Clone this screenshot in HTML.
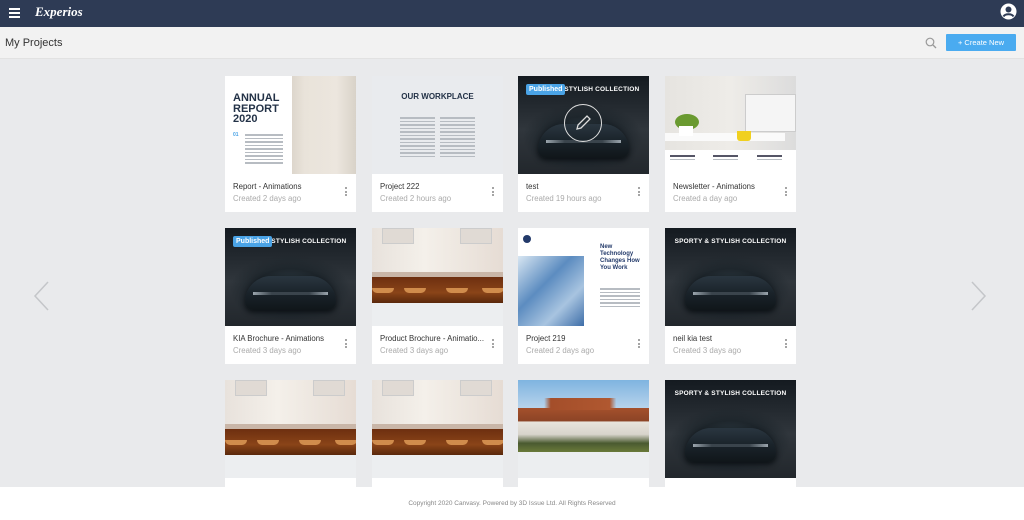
<!DOCTYPE html>
<html><head><meta charset="utf-8"><style>
*{margin:0;padding:0;box-sizing:border-box}
body{width:1024px;height:520px;overflow:hidden;background:#e9eaec;font-family:"Liberation Sans",sans-serif;position:relative}
.top{position:absolute;left:0;top:0;width:1024px;height:27px;background:#2e3b55}
.sub{position:absolute;left:0;top:27px;width:1024px;height:32px;background:#f2f2f2;border-bottom:1px solid #e2e2e2}
.sub h1{position:absolute;left:5px;top:10px;font-size:11px;font-weight:normal;color:#333}
.btn{position:absolute;left:946px;top:34px;width:70px;height:17px;background:#4aabf0;color:#fff;font-size:7.5px;line-height:17px;text-align:center;border-radius:1px}
.foot{position:absolute;left:0;top:487px;width:1024px;height:33px;background:#fff;font-size:6.5px;color:#888;text-align:center;padding-top:13px}
.card{position:absolute;width:131px;height:136px;background:#fff;overflow:hidden}
.th{position:absolute;left:0;top:0;width:131px;height:98px;overflow:hidden}
.t1{position:absolute;left:8px;top:106px;font-size:7.8px;color:#333;white-space:nowrap}
.t2{position:absolute;left:8px;top:118px;font-size:7.8px;color:#aaa}
.dots{position:absolute;right:9px;top:111px;width:2px}
.dots i{display:block;width:2px;height:2px;background:#888;border-radius:1px;margin-bottom:1.5px}
.pub{position:absolute;left:8px;top:8px;background:#4aa3e6;color:#fff;font-size:7px;font-weight:bold;padding:2px 3px;border-radius:2px}
.car{background:radial-gradient(ellipse 60px 35px at 65px 62px,#3a4a54 0%,#1e262c 60%,transparent 100%),linear-gradient(180deg,#141a20 0%,#30363c 55%,#22272c 100%)}
.ct{position:absolute;top:10px;left:0;width:131px;text-align:center;color:#fff;font-size:6.5px;font-weight:bold;letter-spacing:.2px}
.carbody{position:absolute;left:20px;top:48px;width:91px;height:34px;background:linear-gradient(180deg,#2a3640 0%,#1a232a 50%,#10161a 100%);border-radius:26px 26px 8px 8px;box-shadow:0 2px 6px #0a0e12}
.carbody:before{content:"";position:absolute;left:8px;top:16px;width:75px;height:3px;background:linear-gradient(90deg,#9aa4ac,#3a444c 25%,#3a444c 75%,#9aa4ac)}
.line{height:1.5px;background:#b7bcc2;margin-bottom:2px}
.kit .a{position:absolute;left:0;top:0;width:131px;height:44px;background:linear-gradient(90deg,#e8e2dc,#f4f0ea 40%,#e6dcd4)}
.kit .a:before{content:"";position:absolute;left:10px;top:0;width:30px;height:14px;background:#e0dad4;border:1px solid #ccc}
.kit .a:after{content:"";position:absolute;left:88px;top:0;width:30px;height:14px;background:#e0dad4;border:1px solid #ccc}
.kit .b{position:absolute;left:0;top:44px;width:131px;height:5px;background:#c9b6a8}
.kit .c{position:absolute;left:0;top:49px;width:131px;height:26px;background:linear-gradient(180deg,#6d2f10,#8a4418 60%,#5a280c)}
.kit .d{position:absolute;left:0;top:75px;width:131px;height:23px;background:#eceef0}
.stool{position:absolute;top:60px;width:22px;height:5px;background:#d08c4c;border-radius:0 0 10px 10px}
</style></head><body>
<div class="top">
<div style="position:absolute;left:9px;top:8px;width:11px"><div style="height:1.6px;background:#fff;margin-bottom:2.4px"></div><div style="height:1.6px;background:#fff;margin-bottom:2.4px"></div><div style="height:1.6px;background:#fff"></div></div>
<div style="position:absolute;left:35px;top:4px;color:#fff;font:italic bold 13px 'Liberation Serif',serif">Experios</div>
<svg style="position:absolute;left:1000px;top:3px" width="17" height="17" viewBox="0 0 17 17"><circle cx="8.5" cy="8.5" r="8" fill="#fff"/><circle cx="8.5" cy="6.5" r="3" fill="#2e3b55"/><path d="M3.5 13.5c1.5-3 8.5-3 10 0" stroke="#2e3b55" stroke-width="2" fill="none"/></svg>
</div>
<div class="sub"><h1>My Projects</h1>
<svg style="position:absolute;left:925px;top:10px" width="12" height="12" viewBox="0 0 12 12"><circle cx="5" cy="5" r="3.8" stroke="#999" stroke-width="1.2" fill="none"/><path d="M8 8l3 3" stroke="#999" stroke-width="1.3"/></svg>
</div>
<div class="btn">+ Create New</div>
<svg style="position:absolute;left:32px;top:280px" width="18" height="32"><path d="M16 2L3 16l13 14" stroke="#c4c6c9" stroke-width="1.5" fill="none"/></svg>
<svg style="position:absolute;left:970px;top:280px" width="18" height="32"><path d="M2 2l13 14L2 30" stroke="#c4c6c9" stroke-width="1.5" fill="none"/></svg>

<!-- row 1 -->
<div class="card" style="left:225px;top:76px"><div class="th" style="background:#fff">
<div style="position:absolute;left:67px;top:0;width:64px;height:98px;background:linear-gradient(90deg,#ddd6cc,#e9e3da 20%,#ece6de 70%,#d8d2c8)"></div>
<div style="position:absolute;left:8px;top:17px;font:bold 11px/10.5px 'Liberation Sans';color:#233247;width:55px">ANNUAL REPORT 2020</div>
<div style="position:absolute;left:8px;top:56px;font:bold 5px 'Liberation Sans';color:#4aa3e6">01</div>
<div style="position:absolute;left:20px;top:58px;width:38px"><div class="line"></div><div class="line"></div><div class="line"></div><div class="line"></div><div class="line"></div><div class="line"></div><div class="line"></div><div class="line"></div><div class="line"></div></div>
</div><div class="t1">Report - Animations</div><div class="t2">Created 2 days ago</div><div class="dots"><i></i><i></i><i></i></div></div>

<div class="card" style="left:372px;top:76px"><div class="th" style="background:#e9ebee">
<div style="position:absolute;left:0;top:16px;width:131px;text-align:center;font:bold 8px 'Liberation Sans';color:#233247">OUR WORKPLACE</div>
<div style="position:absolute;left:28px;top:41px;width:35px"><div class="line"></div><div class="line"></div><div class="line"></div><div class="line"></div><div class="line"></div><div class="line"></div><div class="line"></div><div class="line"></div><div class="line"></div><div class="line"></div><div class="line"></div><div class="line"></div></div>
<div style="position:absolute;left:68px;top:41px;width:35px"><div class="line"></div><div class="line"></div><div class="line"></div><div class="line"></div><div class="line"></div><div class="line"></div><div class="line"></div><div class="line"></div><div class="line"></div><div class="line"></div><div class="line"></div><div class="line"></div></div>
</div><div class="t1">Project 222</div><div class="t2">Created 2 hours ago</div><div class="dots"><i></i><i></i><i></i></div></div>

<div class="card" style="left:518px;top:76px"><div class="th car"><div class="ct">SPORTY &amp; STYLISH COLLECTION</div><div class="carbody"></div>
<div style="position:absolute;left:46px;top:28px;width:38px;height:38px;border:1.5px solid #ddd;border-radius:50%"></div>
<svg style="position:absolute;left:56px;top:38px" width="18" height="18"><path d="M3 15l1-4 9-9 3 3-9 9z" stroke="#ddd" stroke-width="1.3" fill="none"/></svg>
<div class="pub">Published</div></div>
<div class="t1">test</div><div class="t2">Created 19 hours ago</div><div class="dots"><i></i><i></i><i></i></div></div>

<div class="card" style="left:665px;top:76px"><div class="th" style="background:#fff">
<div style="position:absolute;left:0;top:0;width:131px;height:74px;background:linear-gradient(90deg,#e6e4e0,#eeece8 50%,#dcdcdc)"></div>
<div style="position:absolute;left:80px;top:18px;width:51px;height:38px;background:#f5f5f5;border:1px solid #ccc"></div>
<div style="position:absolute;left:0;top:57px;width:120px;height:8px;background:#fafafa"></div>
<div style="position:absolute;left:72px;top:55px;width:14px;height:10px;background:#f0d020;border-radius:0 0 3px 3px"></div>
<div style="position:absolute;left:10px;top:38px;width:24px;height:16px;background:#6a9a30;border-radius:50%"></div>
<div style="position:absolute;left:14px;top:50px;width:14px;height:10px;background:#fff"></div>
<div style="position:absolute;left:5px;top:79px;width:25px"><div class="line" style="background:#556"></div><div class="line"></div></div>
<div style="position:absolute;left:48px;top:79px;width:25px"><div class="line" style="background:#556"></div><div class="line"></div></div>
<div style="position:absolute;left:92px;top:79px;width:25px"><div class="line" style="background:#556"></div><div class="line"></div></div>
</div><div class="t1">Newsletter - Animations</div><div class="t2">Created a day ago</div><div class="dots"><i></i><i></i><i></i></div></div>

<!-- row 2 -->
<div class="card" style="left:225px;top:228px"><div class="th car"><div class="ct">SPORTY &amp; STYLISH COLLECTION</div><div class="carbody"></div><div class="pub">Published</div></div>
<div class="t1">KIA Brochure - Animations</div><div class="t2">Created 3 days ago</div><div class="dots"><i></i><i></i><i></i></div></div>

<div class="card" style="left:372px;top:228px"><div class="th kit"><div class="a"></div><div class="b"></div><div class="c"></div><div class="stool" style="left:0"></div><div class="stool" style="left:32px"></div><div class="stool" style="left:74px"></div><div class="stool" style="left:110px"></div><div class="d"></div></div>
<div class="t1">Product Brochure - Animatio...</div><div class="t2">Created 3 days ago</div><div class="dots"><i></i><i></i><i></i></div></div>

<div class="card" style="left:518px;top:228px"><div class="th" style="background:#fff">
<div style="position:absolute;left:0;top:28px;width:66px;height:70px;background:linear-gradient(135deg,#d8e6f2,#5c8cc0 40%,#a8c4e0 70%,#3e6ea8)"></div>
<div style="position:absolute;left:5px;top:7px;width:8px;height:8px;border-radius:50%;background:#233a6a"></div>
<div style="position:absolute;left:82px;top:16px;font:bold 6px/7px 'Liberation Sans';color:#233a6a;width:45px">New Technology Changes How You Work</div>
<div style="position:absolute;left:82px;top:60px;width:40px"><div class="line"></div><div class="line"></div><div class="line"></div><div class="line"></div><div class="line"></div><div class="line"></div></div>
</div><div class="t1">Project 219</div><div class="t2">Created 2 days ago</div><div class="dots"><i></i><i></i><i></i></div></div>

<div class="card" style="left:665px;top:228px"><div class="th car"><div class="ct">SPORTY &amp; STYLISH COLLECTION</div><div class="carbody"></div></div>
<div class="t1">neil kia test</div><div class="t2">Created 3 days ago</div><div class="dots"><i></i><i></i><i></i></div></div>

<!-- row 3 -->
<div class="card" style="left:225px;top:380px;height:107px"><div class="th kit"><div class="a"></div><div class="b"></div><div class="c"></div><div class="stool" style="left:0"></div><div class="stool" style="left:32px"></div><div class="stool" style="left:74px"></div><div class="stool" style="left:110px"></div><div class="d"></div></div></div>
<div class="card" style="left:372px;top:380px;height:107px"><div class="th kit"><div class="a"></div><div class="b"></div><div class="c"></div><div class="stool" style="left:0"></div><div class="stool" style="left:32px"></div><div class="stool" style="left:74px"></div><div class="stool" style="left:110px"></div><div class="d"></div></div></div>
<div class="card" style="left:518px;top:380px;height:107px"><div class="th" style="background:#eceef0">
<div style="position:absolute;left:0;top:0;width:131px;height:72px;background:linear-gradient(180deg,#7fb4e0,#b8d4ec 40%,#fff 40.1%,transparent 40.2%)"></div>
<div style="position:absolute;left:0;top:28px;width:131px;height:44px;background:linear-gradient(180deg,#a4502c 0%,#8c4426 30%,#e8e4dc 31%,#d8d4cc 60%,#4a5a30 80%,#6a7a3a)"></div>
<div style="position:absolute;left:0;top:18px;width:131px;height:12px;background:linear-gradient(90deg,transparent 20%,#a44e2a 25%,#b05830 70%,transparent 75%)"></div>
</div></div>
<div class="card" style="left:665px;top:380px;height:107px"><div class="th car"><div class="ct">SPORTY &amp; STYLISH COLLECTION</div><div class="carbody"></div></div></div>

<div class="foot">Copyright 2020 Canvasy. Powered by 3D Issue Ltd. All Rights Reserved</div>
</body></html>
